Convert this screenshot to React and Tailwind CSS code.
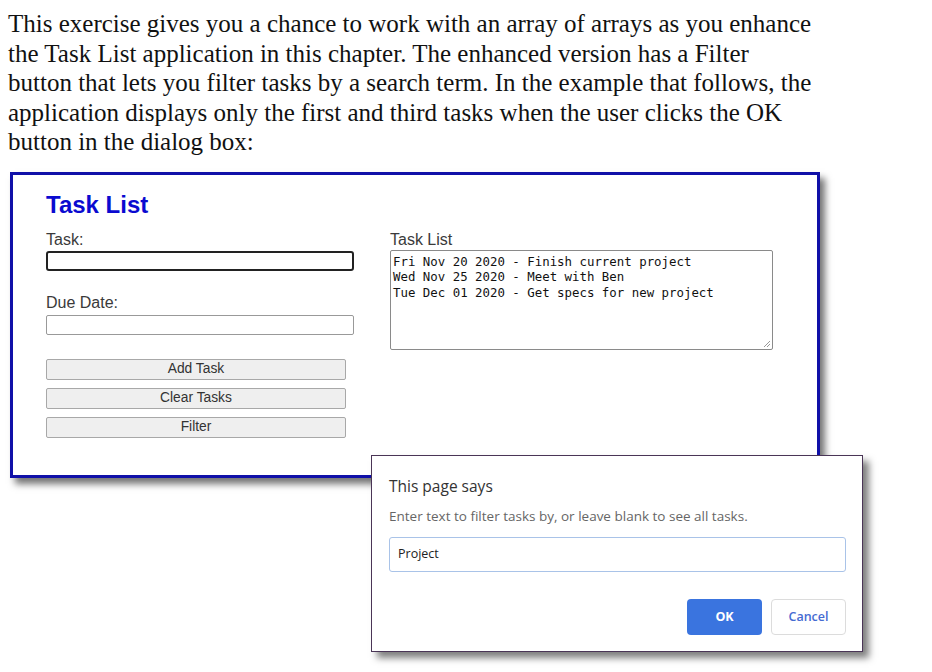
export default function App() {
  const tasks = [
    "Fri Nov 20 2020 - Finish current project",
    "Wed Nov 25 2020 - Meet with Ben",
    "Tue Dec 01 2020 - Get specs for new project",
  ];
  return (
    <div className="relative w-[932px] h-[672px] bg-white overflow-hidden">
      <p
        className="pl-[8px] pt-[9px] text-[25px] leading-[29.5px] text-[#111] whitespace-nowrap"
        style={{ fontFamily: '"Liberation Serif", "Times New Roman", serif' }}
      >
        This exercise gives you a chance to work with an array of arrays as you enhance
        <br />
        the Task List application in this chapter. The enhanced version has a Filter
        <br />
        button that lets you filter tasks by a search term. In the example that follows, the
        <br />
        application displays only the first and third tasks when the user clicks the OK
        <br />
        button in the dialog box:
      </p>

      <div
        className="ml-[10px] mt-[15px] w-[810px] h-[306px] border-[3px] border-[#1010a8] bg-white shadow-[5px_6px_7px_rgba(0,0,0,0.55)] pl-[33px] pt-[16px]"
        style={{ fontFamily: '"Liberation Sans", Arial, sans-serif' }}
      >
        <h1 className="text-[24px] leading-[28px] font-bold text-[#0a0ad0]">Task List</h1>
        <div className="flex mt-[12px]">
          <div className="w-[308px] flex flex-col">
            <label className="text-[16px] leading-[18px] text-[#3a3a3a]">Task:</label>
            <div className="mt-[2px] h-[20px] w-[308px] border-2 border-[#222] rounded-[3px] bg-white"></div>
            <label className="mt-[23px] text-[16px] leading-[18px] text-[#3a3a3a]">Due Date:</label>
            <div className="mt-[3px] h-[20px] w-[308px] border border-[#999] rounded-[2px] bg-white"></div>
            <div className="mt-[24px] flex flex-col gap-[8px] w-[300px]">
              {["Add Task", "Clear Tasks", "Filter"].map((b) => (
                <div
                  key={b}
                  className="h-[21px] border border-[#a8a8a8] rounded-[2px] bg-[#efefef] flex items-center justify-center text-[13.8px] text-[#333]"
                >
                  {b}
                </div>
              ))}
            </div>
          </div>
          <div className="ml-[36px] flex flex-col">
            <label className="text-[16px] leading-[18px] text-[#3a3a3a]">Task List</label>
            <div className="mt-[1px] relative w-[383px] h-[100px] border border-[#8a8a8a] rounded-[2px] bg-white pl-[2px] pt-[3px]">
              {tasks.map((t) => (
                <div
                  key={t}
                  className="text-[12.4px] leading-[15.5px] text-[#111] whitespace-pre"
                  style={{ fontFamily: '"DejaVu Sans Mono", "Liberation Mono", monospace' }}
                >
                  {t}
                </div>
              ))}
              <svg className="absolute right-[1px] bottom-[1px]" width="9" height="9" viewBox="0 0 9 9">
                <path d="M8 2 L2 8 M8 5 L5 8" stroke="#999" strokeWidth="1" />
              </svg>
            </div>
          </div>
        </div>
      </div>

      <div
        className="absolute left-[371px] top-[455px] w-[492px] h-[197px] bg-white border border-[#4a3556] shadow-[6px_6px_7px_rgba(0,0,0,0.5)] px-[17px] pt-[20px]"
        style={{ fontFamily: '"Open Sans", "Noto Sans", sans-serif' }}
      >
        <div className="text-[15.5px] leading-[20px] text-[#333]">This page says</div>
        <div className="mt-[12px] text-[13.5px] leading-[17px] text-[#666]">
          Enter text to filter tasks by, or leave blank to see all tasks.
        </div>
        <div className="mt-[12px] w-[457px] h-[35px] border-[1.5px] border-[#a9c3e8] rounded-[3px] flex items-center pl-[8px] text-[12.5px] text-[#222]">
          Project
        </div>
        <div className="mt-[27px] flex justify-end gap-[9px] w-[457px]">
          <div className="w-[75px] h-[36px] rounded-[4px] bg-[#3a74df] flex items-center justify-center text-white text-[12.5px] font-bold">
            OK
          </div>
          <div className="w-[75px] h-[36px] rounded-[4px] bg-white border border-[#dcdcdc] flex items-center justify-center text-[#456bd2] text-[12.5px] font-semibold">
            Cancel
          </div>
        </div>
      </div>
    </div>
  );
}
